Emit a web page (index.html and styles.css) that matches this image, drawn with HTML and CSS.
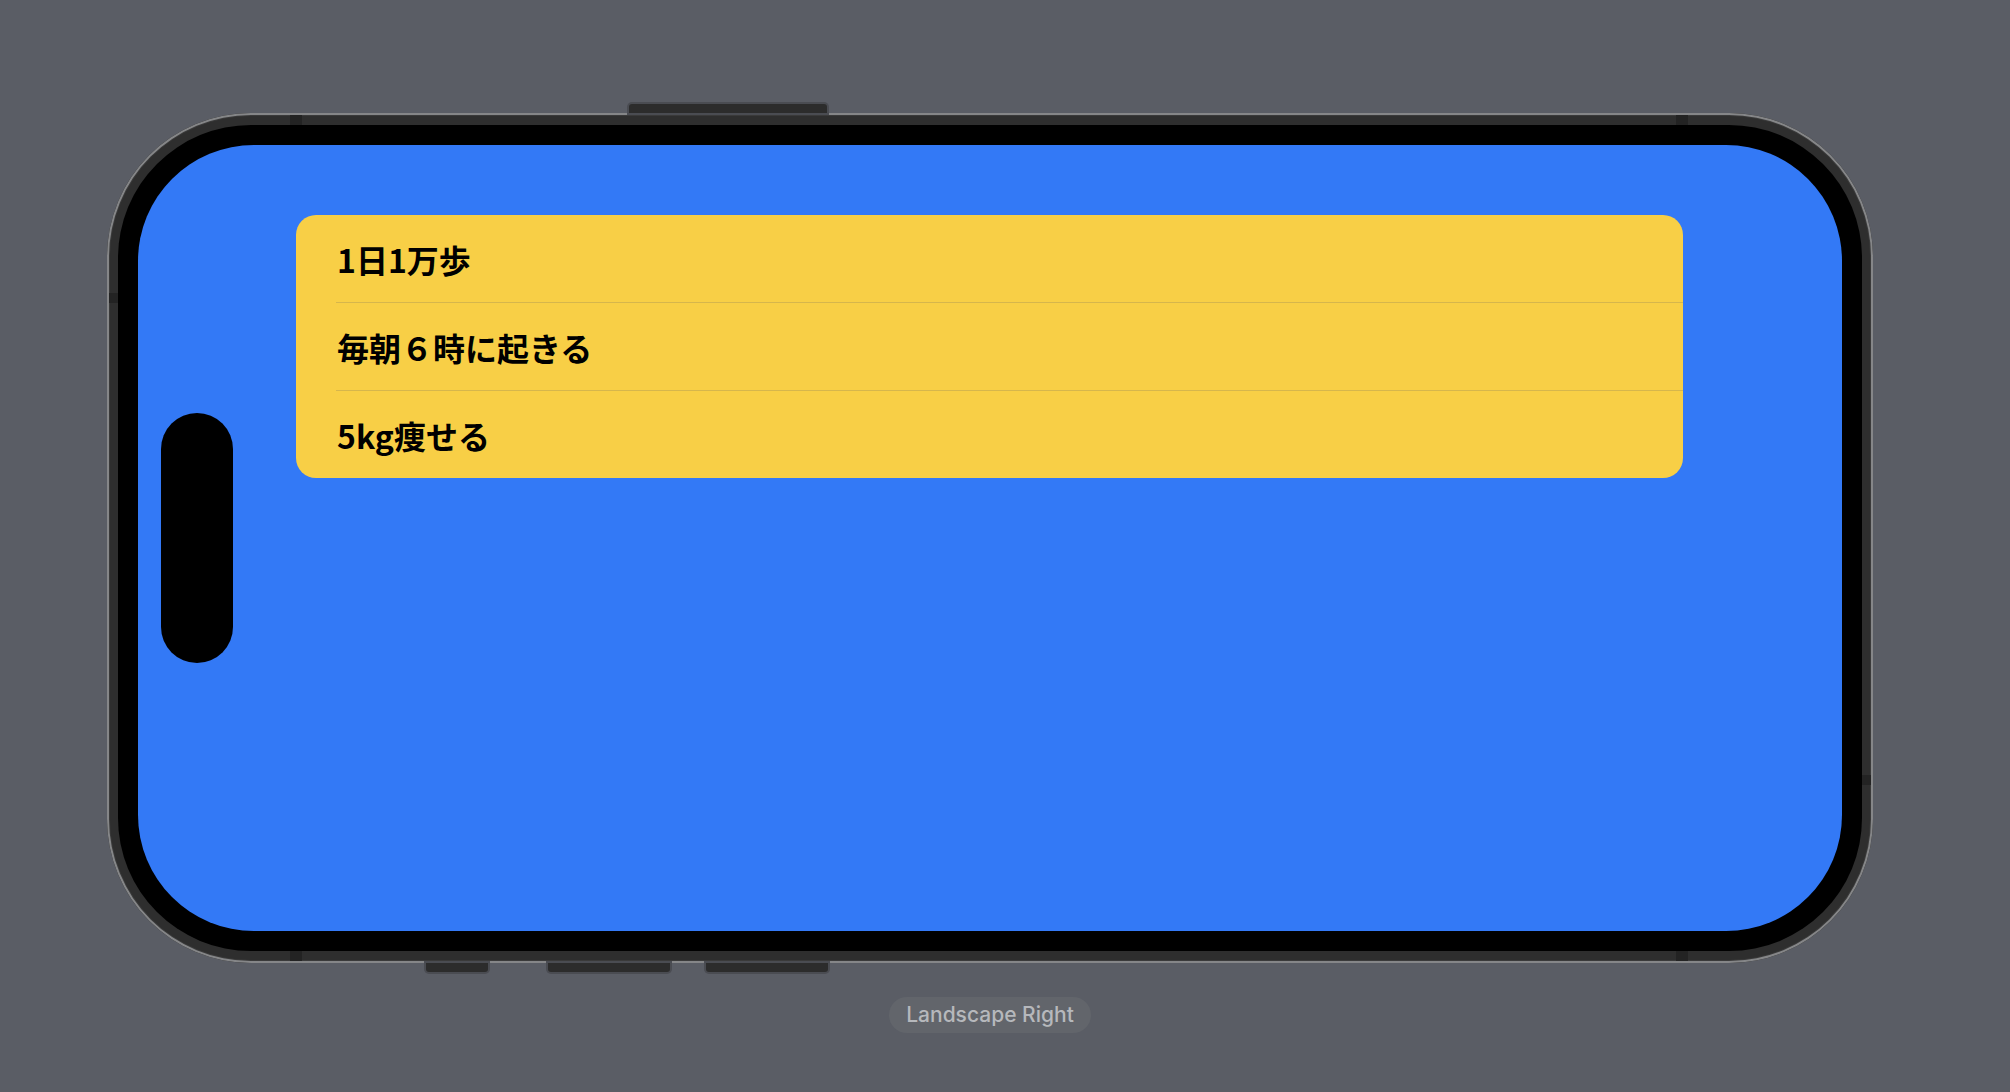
FILE: index.html
```html
<!DOCTYPE html>
<html lang="ja">
<head>
<meta charset="utf-8">
<title>Landscape Right</title>
<link rel="stylesheet" href="styles.css">
</head>
<body>
<div class="stage">
  <div class="phone">
    <span class="btn btn-top"></span>
    <span class="btn btn-b1"></span>
    <span class="btn btn-b2"></span>
    <span class="btn btn-b3"></span>
    <span class="band band-t1"></span>
    <span class="band band-t2"></span>
    <span class="band band-bt1"></span>
    <span class="band band-bt2"></span>
    <span class="band band-l1"></span>
    <span class="band band-r1"></span>
    <div class="bezel">
      <div class="screen">
        <div class="island"></div>
        <div class="card">
          <div class="row"><span class="label">1日1万歩</span></div>
          <div class="row"><span class="label">毎朝６時に起きる</span></div>
          <div class="row"><span class="label">5kg痩せる</span></div>
        </div>
      </div>
    </div>
  </div>
  <div class="caption">Landscape Right</div>
</div>
</body>
</html>
```
FILE: styles.css
```css
html, body {
  margin: 0;
  padding: 0;
  background: #5a5d65;
}
body {
  width: 2010px;
  height: 1092px;
  overflow: hidden;
}
.stage {
  display: flex;
  flex-direction: column;
  align-items: center;
  width: 1766px;
  padding-top: 113px;
  padding-left: 107px;
}
.phone {
  position: relative;
  box-sizing: border-box;
  width: 1766px;
  height: 850px;
  padding: 12px 11px;
  border-radius: 144px;
  background: #2e2e2e;
  box-shadow: inset 0 0 0 2px #858688, inset 0 0 0 3px #3a3a3a;
}
.btn {
  position: absolute;
  background: #2c2c2c;
  box-shadow: 0 0 0 2px #4a4c52;
}
.btn-top { left: 522px; top: -9px; width: 198px; height: 9px; border-radius: 3px 3px 0 0; }
.btn-b1 { left: 319px; bottom: -9px; width: 62px; height: 9px; border-radius: 0 0 3px 3px; }
.btn-b2 { left: 441px; bottom: -9px; width: 122px; height: 9px; border-radius: 0 0 3px 3px; }
.btn-b3 { left: 599px; bottom: -9px; width: 122px; height: 9px; border-radius: 0 0 3px 3px; }
.band {
  position: absolute;
  background: #232323;
}
.band-t1 { left: 183px; top: 2px; width: 12px; height: 10px; }
.band-t2 { left: 1569px; top: 2px; width: 12px; height: 10px; }
.band-bt1 { left: 183px; bottom: 2px; width: 12px; height: 10px; }
.band-bt2 { left: 1569px; bottom: 2px; width: 12px; height: 10px; }
.band-l1 { left: 2px; top: 180px; width: 9px; height: 10px; }
.band-r1 { right: 2px; top: 662px; width: 9px; height: 10px; }
.bezel {
  box-sizing: border-box;
  height: 100%;
  padding: 20px;
  border-radius: 133px;
  background: #000;
}
.screen {
  position: relative;
  box-sizing: border-box;
  height: 100%;
  padding: 70px 159px 0 158px;
  border-radius: 116px;
  background: #3379f6;
}
.island {
  position: absolute;
  left: 23px;
  top: 268px;
  width: 72px;
  height: 250px;
  border-radius: 36px;
  background: #000;
}
.card {
  display: flex;
  flex-direction: column;
  border-radius: 20px;
  background: #f8cf46;
  overflow: hidden;
}
.row {
  display: flex;
  align-items: center;
  box-sizing: border-box;
  height: 88px;
  margin-left: 40px;
  padding-left: 1px;
  border-top: 1px solid #d6b64c;
}
.row:first-child {
  border-top: none;
  height: 87px;
}
.label {
  font-family: "Noto Sans CJK JP", "Noto Sans", sans-serif;
  font-size: 32px;
  font-weight: 600;
  color: #000;
  line-height: 1;
}
.caption {
  margin-top: 34px;
  height: 36px;
  padding: 0 17px;
  border-radius: 18px;
  background: #62656b;
  color: #b6b8bc;
  font-family: Inter, "Noto Sans", sans-serif;
  font-size: 21px;
  font-weight: 500;
  line-height: 36px;
}
```
